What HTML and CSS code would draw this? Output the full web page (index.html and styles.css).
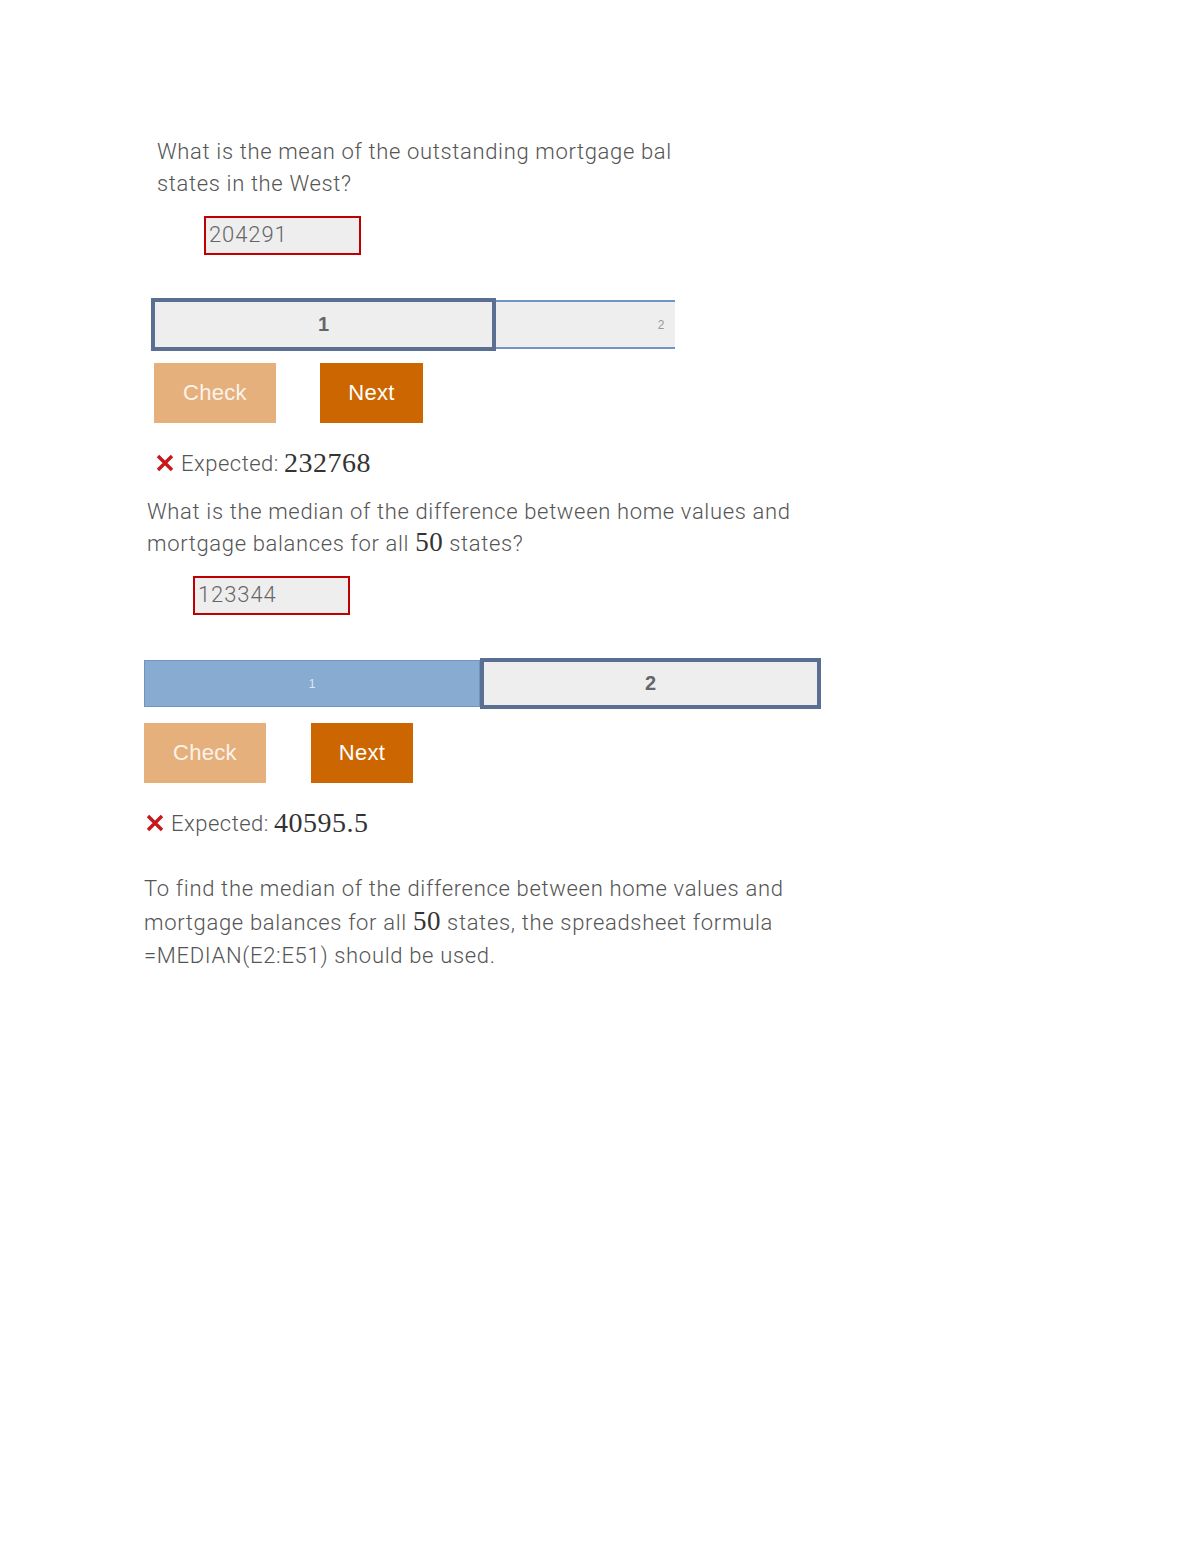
FILE: index.html
```html
<!DOCTYPE html>
<html lang="en">
<head>
<meta charset="utf-8">
<title>Quiz</title>
<link rel="stylesheet" href="styles.css">
</head>
<body>
<main class="page">
  <section class="quiz quiz--first">
    <div class="question">
      <span class="line">What is the mean of the outstanding mortgage bal</span>
      <span class="line">states in the West?</span>
    </div>
    <div class="answer">204291</div>
    <div class="tabs">
      <div class="tab tab--active tab--w345">1</div>
      <div class="tab tab--rest tab--w330">2</div>
    </div>
    <div class="actions">
      <button class="btn btn--check">Check</button>
      <button class="btn btn--next">Next</button>
    </div>
    <div class="result">
      <svg class="cross" width="20" height="20" viewBox="0 0 20 20"><path d="M3 3 L17 17 M17 3 L3 17" stroke="#c8161b" stroke-width="3.4" stroke-linecap="butt"/></svg>
      <span class="result-label">Expected:</span>
      <span class="math">232768</span>
    </div>
  </section>

  <section class="quiz quiz--second">
    <div class="question">
      What is the median of the difference between home values and<br>
      mortgage balances for all <span class="math math--inline">50</span> states?
    </div>
    <div class="answer">123344</div>
    <div class="tabs">
      <div class="tab tab--done tab--w336">1</div>
      <div class="tab tab--active tab--w341">2</div>
    </div>
    <div class="actions">
      <button class="btn btn--check">Check</button>
      <button class="btn btn--next">Next</button>
    </div>
    <div class="result">
      <svg class="cross" width="20" height="20" viewBox="0 0 20 20"><path d="M3 3 L17 17 M17 3 L3 17" stroke="#c8161b" stroke-width="3.4" stroke-linecap="butt"/></svg>
      <span class="result-label">Expected:</span>
      <span class="math">40595.5</span>
    </div>
    <p class="explain">
      To find the median of the difference between home values and<br>
      mortgage balances for all <span class="math math--inline">50</span> states, the spreadsheet formula<br>
      =MEDIAN(E2:E51) should be used.
    </p>
  </section>
</main>
</body>
</html>
```
FILE: styles.css
```css
html, body {
  margin: 0;
  padding: 0;
  background: #ffffff;
}

body {
  font-family: Roboto, "Liberation Sans", sans-serif;
  font-weight: 300;
  color: #555555;
}

.page {
  padding-top: 136px;
  display: flex;
  flex-direction: column;
}

.quiz {
  display: flex;
  flex-direction: column;
  align-items: flex-start;
}

.quiz--first {
  margin-left: 151px;
  width: 524px;
  overflow: hidden;
}

.quiz--second {
  margin-left: 144px;
  margin-top: 17px;
}

.question {
  font-size: 22px;
  line-height: 32px;
  letter-spacing: 0.65px;
}

.quiz--first .question {
  padding-left: 6px;
  width: 518px;
}

.quiz--second .question {
  padding-left: 3px;
}

.line {
  display: block;
  white-space: nowrap;
}

.answer {
  box-sizing: border-box;
  width: 157px;
  height: 39px;
  margin-top: 16px;
  border: 2.5px solid #c00000;
  background: #eeeeee;
  font-size: 22px;
  line-height: 34px;
  padding-left: 3px;
  color: #666666;
  letter-spacing: 0.9px;
}

.quiz--first .answer { margin-left: 53px; }
.quiz--second .answer { margin-left: 49px; }

.tabs {
  display: flex;
  align-items: center;
  margin-top: 43px;
  font-family: "Liberation Sans", Arial, sans-serif;
}

.tab {
  box-sizing: border-box;
  display: flex;
  align-items: center;
  justify-content: center;
  flex: none;
}

.tab--w345 { width: 345px; }
.tab--w330 { width: 330px; }
.tab--w336 { width: 336px; }
.tab--w341 { width: 341px; }

.tab--active {
  height: 53px;
  border: 4px solid #5b6f93;
  background: #eeeeee;
  color: #666666;
  font-weight: 700;
  font-size: 20px;
}

.quiz--second .tab--active { height: 51px; }

.tab--rest {
  height: 49px;
  border-top: 2px solid #7196c2;
  border-bottom: 2px solid #7196c2;
  background: #eeeeee;
  color: #999999;
  font-size: 12px;
}

.tab--done {
  height: 47px;
  border: 1px solid #6f94c0;
  background: #87abd1;
  color: #dfe8f2;
  font-size: 12px;
}

.actions {
  display: flex;
  margin-top: 12px;
}

.quiz--first .actions { margin-left: 3px; gap: 44px; }
.quiz--second .actions { margin-top: 14px; gap: 45px; }

.btn {
  height: 60px;
  border: none;
  padding: 0;
  color: #ffffff;
  font-family: "Liberation Sans", Arial, sans-serif;
  font-size: 22px;
  letter-spacing: 0.3px;
  cursor: pointer;
}

.btn--check {
  width: 122px;
  background: #e6b07d;
  color: #fbf3ea;
}

.btn--next {
  width: 103px;
  background: #cc6600;
}

.quiz--second .btn--next { width: 102px; }

.result {
  display: flex;
  align-items: center;
  height: 32px;
  margin-top: 24px;
  font-size: 22px;
}

.quiz--first .result { margin-left: 4px; }
.quiz--second .result { margin-left: 1px; }

.cross {
  margin-right: 6px;
  flex: none;
}

.result-label {
  letter-spacing: 0.5px;
  margin-right: 5px;
}

.math {
  font-family: "Liberation Serif", "Times New Roman", serif;
  font-weight: 400;
  font-size: 28px;
  color: #333333;
  letter-spacing: 0.5px;
}

.math--inline {
  font-size: 27px;
  line-height: 1;
}

.explain {
  margin: 33px 0 0 0;
  font-size: 22px;
  line-height: 33.5px;
  letter-spacing: 0.68px;
}
```
